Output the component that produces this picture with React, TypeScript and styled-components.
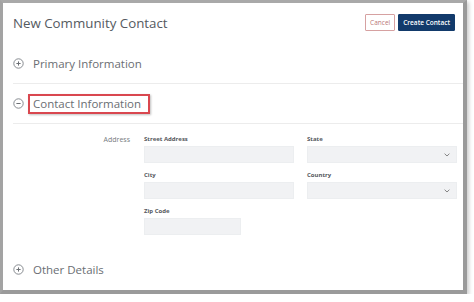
import React from "react";
import styled, { createGlobalStyle } from "styled-components";

const Global = createGlobalStyle`
  html, body { margin: 0; padding: 0; background: #ffffff; }
  body { font-family: "Open Sans", "Liberation Sans", sans-serif; }
  * { box-sizing: border-box; }
`;

const Frame = styled.div`
  width: 467px;
  height: 294px;
  border-top: 3px solid #a9a9a9;
  border-left: 3px solid #a3a3a3;
  border-right: 4px solid #9a9a9a;
  border-bottom: 4px solid #9a9a9a;
  box-shadow: 2px 2px 4px rgba(0, 0, 0, 0.2);
  background: #ffffff;
  display: flex;
  flex-direction: column;
  padding: 0 0 0 10px;
`;

const Header = styled.div`
  display: flex;
  justify-content: space-between;
  align-items: flex-start;
  height: 41px;
  padding: 11px 8px 0 0;
`;

const Title = styled.h1`
  margin: 3px 0 0 0;
  font-size: 13.3px;
  font-weight: 400;
  color: #555a5f;
  line-height: 1;
`;

const Buttons = styled.div`
  display: flex;
  gap: 3px;
`;

const Button = styled.button<{ $primary?: boolean }>`
  height: 17px;
  padding: 0 4px;
  font-family: "Open Sans", sans-serif;
  font-size: 6.5px;
  font-weight: ${(p) => (p.$primary ? 600 : 400)};
  border-radius: 1px;
  border: 1px solid ${(p) => (p.$primary ? "#123a6b" : "#d6a1a1")};
  background: ${(p) => (p.$primary ? "#123a6b" : "#ffffff")};
  color: ${(p) => (p.$primary ? "#ffffff" : "#b97878")};
  line-height: 15px;
  cursor: pointer;
`;

const Section = styled.div<{ $height: number; $divider?: boolean }>`
  height: ${(p) => p.$height}px;
  display: flex;
  align-items: center;
  border-bottom: ${(p) => (p.$divider ? "1px solid #ececec" : "none")};
`;

const SectionTitle = styled.span<{ $highlight?: boolean }>`
  display: inline-flex;
  align-items: center;
  white-space: nowrap;
  font-size: 11.5px;
  color: #6a6e73;
  height: 20px;
  margin-left: ${(p) => (p.$highlight ? "4px" : "9px")};
  padding: ${(p) => (p.$highlight ? "0 7px 0 3px" : "0")};
  border: ${(p) => (p.$highlight ? "2px solid #d9474f" : "none")};
  box-shadow: ${(p) => (p.$highlight ? "1px 1px 2px rgba(0,0,0,0.25)" : "none")};
`;

const Icon = ({ open }: { open?: boolean }) => (
  <svg width="11" height="11" viewBox="0 0 11 11">
    <circle cx="5.5" cy="5.5" r="4.7" fill="none" stroke="#7b7f84" strokeWidth="0.9" />
    <line x1="3.4" y1="5.5" x2="7.6" y2="5.5" stroke="#6b6f74" strokeWidth="1" />
    {!open && <line x1="5.5" y1="3.4" x2="5.5" y2="7.6" stroke="#6b6f74" strokeWidth="1" />}
  </svg>
);

const Form = styled.div`
  display: flex;
  padding-top: 12px;
  height: 128px;
`;

const SideLabel = styled.div`
  width: 117px;
  text-align: right;
  font-size: 7px;
  color: #777b80;
  line-height: 8px;
`;

const Fields = styled.div`
  margin-left: 14px;
  display: grid;
  grid-template-columns: 150px 150px;
  column-gap: 13px;
  row-gap: 9px;
  align-content: start;
`;

const Field = styled.div`
  display: flex;
  flex-direction: column;
  gap: 4px;
`;

const FieldLabel = styled.label`
  font-size: 6px;
  font-weight: 700;
  color: #55585d;
  line-height: 6px;
`;

const Input = styled.div<{ $width?: number }>`
  width: ${(p) => (p.$width ? `${p.$width}px` : "100%")};
  height: 17px;
  background: #f1f2f4;
  border: 1px solid #eceef0;
  display: flex;
  align-items: center;
  justify-content: flex-end;
  padding-right: 6px;
`;

const Chevron = () => (
  <svg width="6" height="4" viewBox="0 0 6 4">
    <polyline points="0.6,0.7 3,3 5.4,0.7" fill="none" stroke="#777" strokeWidth="0.9" />
  </svg>
);

export default function App() {
  return (
    <>
      <Global />
      <Frame>
        <Header>
          <Title>New Community Contact</Title>
          <Buttons>
            <Button>Cancel</Button>
            <Button $primary>Create Contact</Button>
          </Buttons>
        </Header>
        <Section $height={40} $divider>
          <Icon />
          <SectionTitle>Primary Information</SectionTitle>
        </Section>
        <Section $height={40} $divider>
          <Icon open />
          <SectionTitle $highlight>Contact Information</SectionTitle>
        </Section>
        <Form>
          <SideLabel>Address</SideLabel>
          <Fields>
            <Field>
              <FieldLabel>Street Address</FieldLabel>
              <Input />
            </Field>
            <Field>
              <FieldLabel>State</FieldLabel>
              <Input>
                <Chevron />
              </Input>
            </Field>
            <Field>
              <FieldLabel>City</FieldLabel>
              <Input />
            </Field>
            <Field>
              <FieldLabel>Country</FieldLabel>
              <Input>
                <Chevron />
              </Input>
            </Field>
            <Field>
              <FieldLabel>Zip Code</FieldLabel>
              <Input $width={97} />
            </Field>
          </Fields>
        </Form>
        <Section $height={35}>
          <Icon />
          <SectionTitle>Other Details</SectionTitle>
        </Section>
      </Frame>
    </>
  );
}
